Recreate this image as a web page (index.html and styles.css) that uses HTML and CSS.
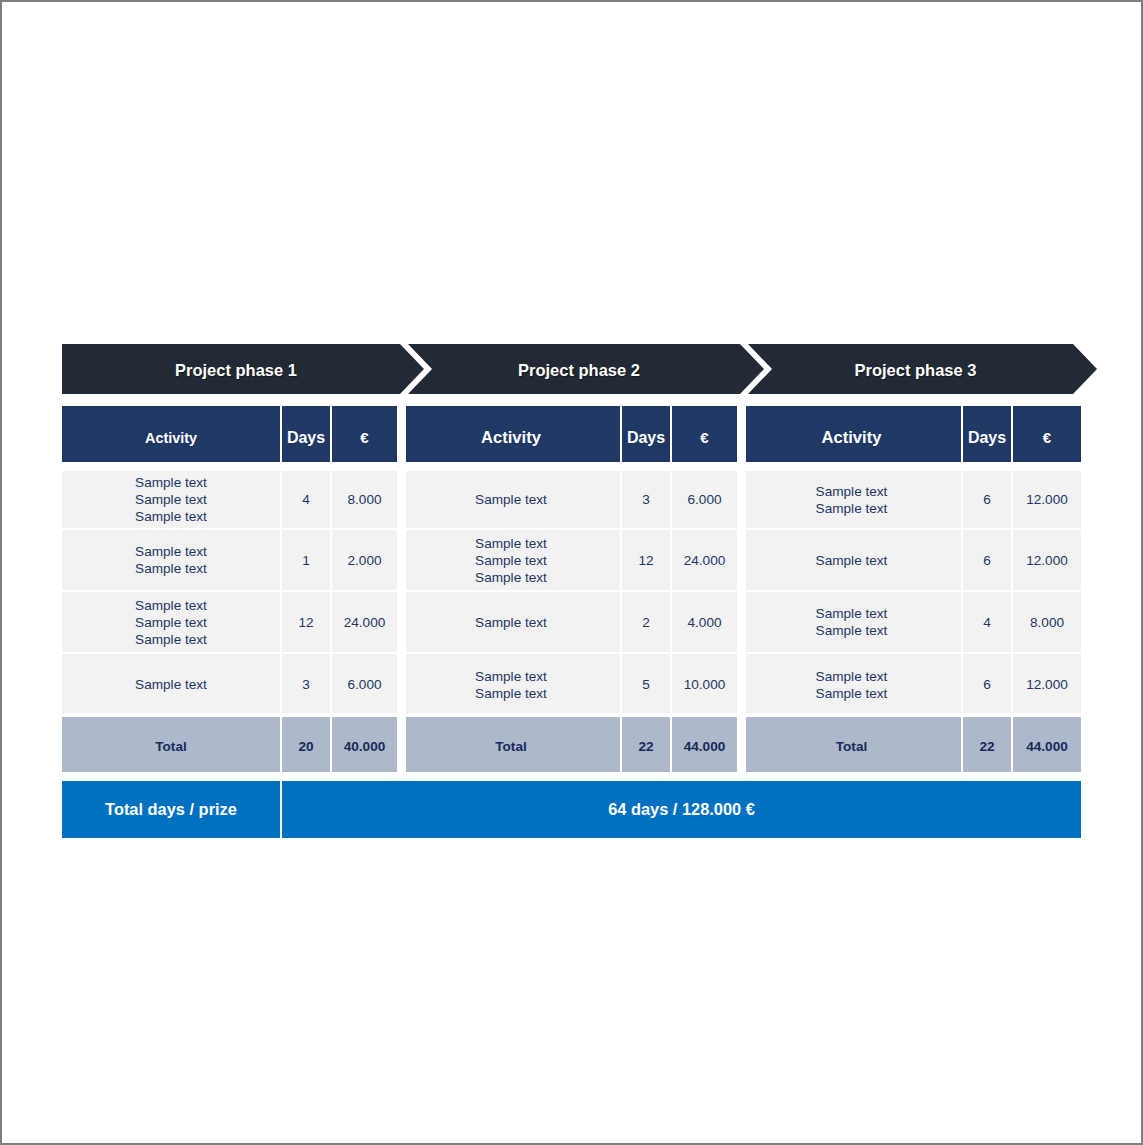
FILE: index.html
```html
<!DOCTYPE html>
<html lang="en">
<head>
<meta charset="utf-8">
<title>Project phases</title>
<link rel="stylesheet" href="styles.css">
</head>
<body>
<div class="frame">
  <div class="board">
    <div class="phases">
      <div class="phase phase-first"><span>Project phase 1</span></div>
      <div class="phase phase-mid"><span>Project phase 2</span></div>
      <div class="phase phase-last"><span>Project phase 3</span></div>
    </div>

    <div class="tables">
      <div class="table t1">
        <div class="row head"><div class="cell act-small">Activity</div><div class="cell">Days</div><div class="cell">€</div></div>
        <div class="row body r1"><div class="cell">Sample text<br>Sample text<br>Sample text</div><div class="cell">4</div><div class="cell">8.000</div></div>
        <div class="row body r2"><div class="cell">Sample text<br>Sample text</div><div class="cell">1</div><div class="cell">2.000</div></div>
        <div class="row body r3"><div class="cell">Sample text<br>Sample text<br>Sample text</div><div class="cell">12</div><div class="cell">24.000</div></div>
        <div class="row body r4"><div class="cell">Sample text</div><div class="cell">3</div><div class="cell">6.000</div></div>
        <div class="row total"><div class="cell">Total</div><div class="cell">20</div><div class="cell">40.000</div></div>
      </div>

      <div class="table t2">
        <div class="row head"><div class="cell">Activity</div><div class="cell">Days</div><div class="cell">€</div></div>
        <div class="row body r1"><div class="cell">Sample text</div><div class="cell">3</div><div class="cell">6.000</div></div>
        <div class="row body r2"><div class="cell">Sample text<br>Sample text<br>Sample text</div><div class="cell">12</div><div class="cell">24.000</div></div>
        <div class="row body r3"><div class="cell">Sample text</div><div class="cell">2</div><div class="cell">4.000</div></div>
        <div class="row body r4"><div class="cell">Sample text<br>Sample text</div><div class="cell">5</div><div class="cell">10.000</div></div>
        <div class="row total"><div class="cell">Total</div><div class="cell">22</div><div class="cell">44.000</div></div>
      </div>

      <div class="table t3">
        <div class="row head"><div class="cell">Activity</div><div class="cell">Days</div><div class="cell">€</div></div>
        <div class="row body r1"><div class="cell">Sample text<br>Sample text</div><div class="cell">6</div><div class="cell">12.000</div></div>
        <div class="row body r2"><div class="cell">Sample text</div><div class="cell">6</div><div class="cell">12.000</div></div>
        <div class="row body r3"><div class="cell">Sample text<br>Sample text</div><div class="cell">4</div><div class="cell">8.000</div></div>
        <div class="row body r4"><div class="cell">Sample text<br>Sample text</div><div class="cell">6</div><div class="cell">12.000</div></div>
        <div class="row total"><div class="cell">Total</div><div class="cell">22</div><div class="cell">44.000</div></div>
      </div>
    </div>

    <div class="summary">
      <div class="sum-cell">Total days / prize</div>
      <div class="sum-cell">64 days / 128.000 €</div>
    </div>
  </div>
</div>
</body>
</html>
```

FILE: styles.css
```css
html, body {
  margin: 0;
  padding: 0;
  background: #ffffff;
}

body {
  font-family: "Liberation Sans", Arial, sans-serif;
  overflow: hidden;
}

.frame {
  box-sizing: border-box;
  width: 1143px;
  height: 1145px;
  border: 2px solid #7f7f7f;
  background: #ffffff;
}

.board {
  padding: 342px 0 0 60px;
  width: 1019px;
}

/* Chevrons */
.phases {
  display: flex;
  height: 50px;
}

.phase {
  box-sizing: border-box;
  height: 50px;
  background: #222a35;
  color: #ffffff;
  font-weight: bold;
  font-size: 16.5px;
  display: flex;
  align-items: center;
  justify-content: center;
  padding-right: 14px;
  padding-top: 2px;
  text-shadow: 1px 1px 1px rgba(0, 0, 0, 0.45);
  flex: none;
}

.phase-first {
  width: 362px;
  clip-path: polygon(0 0, calc(100% - 24px) 0, 100% 50%, calc(100% - 24px) 100%, 0 100%);
}

.phase-mid {
  width: 356px;
  margin-left: -16px;
  clip-path: polygon(0 0, calc(100% - 24px) 0, 100% 50%, calc(100% - 24px) 100%, 0 100%, 24px 50%);
}

.phase-last {
  width: 349px;
  margin-left: -16px;
  clip-path: polygon(0 0, calc(100% - 24px) 0, 100% 50%, calc(100% - 24px) 100%, 0 100%, 24px 50%);
}

/* Tables */
.tables {
  display: flex;
  gap: 9px;
  margin-top: 12px;
}

.table {
  display: flex;
  flex-direction: column;
  gap: 2px;
}

.t1 { width: 335px; --cols: 218px 48px 65px; }
.t2 { width: 331px; --cols: 214px 48px 65px; }
.t3 { width: 335px; --cols: 215px 48px 68px; }

.row {
  display: grid;
  grid-template-columns: var(--cols);
  column-gap: 2px;
}

.cell {
  box-sizing: border-box;
  display: flex;
  align-items: center;
  justify-content: center;
  text-align: center;
}

.t2 .cell:first-child,
.t3 .cell:first-child {
  padding-right: 4px;
}

.head {
  height: 56px;
  margin-bottom: 7px;
}

.head .cell {
  background: #203864;
  color: #ffffff;
  font-weight: bold;
  font-size: 16px;
  padding-top: 7px;
}

.head .cell:first-child {
  font-size: 16.6px;
}

.head .cell:last-child {
  font-size: 15px;
}

.head .cell.act-small {
  font-size: 14.4px;
}

.body .cell {
  background: #f2f2f2;
  color: #1f3766;
  font-size: 13.6px;
  line-height: 17px;
}

.r1 { height: 57px; }
.r2 { height: 60px; }
.r3 { height: 60px; }
.r4 { height: 59px; }
.r4 .cell { padding-top: 2px; }

.total {
  height: 55px;
  margin-top: 2px;
}

.total .cell {
  background: #adb9ca;
  color: #172a5a;
  font-weight: bold;
  font-size: 13.6px;
  padding-top: 3px;
}

/* Summary bar */
.summary {
  display: grid;
  grid-template-columns: 218px 1fr;
  column-gap: 2px;
  height: 57px;
  margin-top: 9px;
}

.sum-cell {
  background: #0070c0;
  color: #ffffff;
  font-weight: bold;
  font-size: 16.4px;
  display: flex;
  align-items: center;
  justify-content: center;
}
```
